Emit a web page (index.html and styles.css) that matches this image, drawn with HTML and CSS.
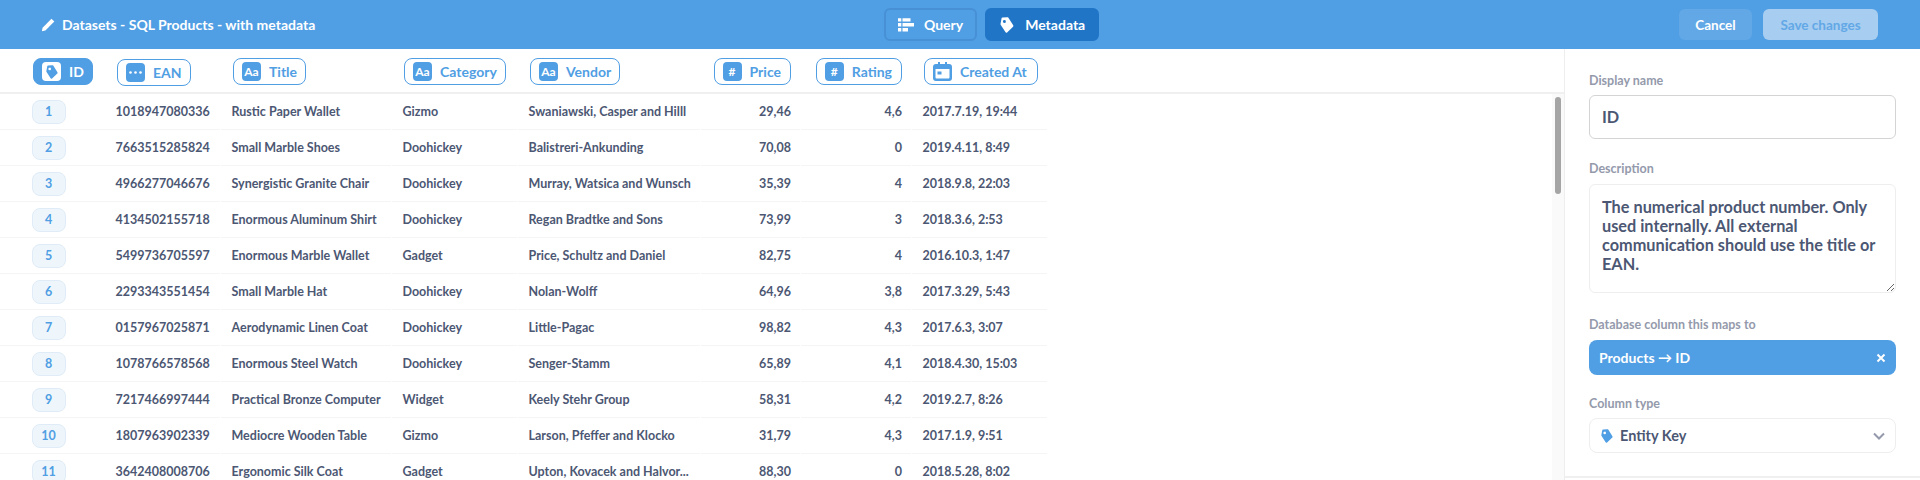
FILE: index.html
```html
<!DOCTYPE html>
<html lang="en">
<head>
    <meta charset="UTF-8">
    <title>Datasets - SQL Products - with metadata</title>
    <link rel="stylesheet" href="styles.css">
</head>
<body>
    <svg class="defs" width="0" height="0">
        <symbol id="tag" viewBox="0 0 16 16">
            <path fill-rule="evenodd" d="M3.600.6 8.400.3c.4 0 .7.1 1 .4l4.800 7.600c.4.600.2 1.300-.4 1.700l-5.700 5.400c-.6.4-1.300.3-1.700-.3L1.800 7.900c-.2-.3-.3-.6-.3-.9L2.500 1.600c.1-.6.5-1 1.100-1zM5.300 3a1.500 1.500 0 1 0 .1 3 1.500 1.500 0 0 0-.1-3z"/>
        </symbol>
    </svg>

    <header class="topbar">
        <div class="crumb">
            <svg class="pencil" viewBox="0 0 16 16"><path d="M12 .8 15.200 4 5 14.200 1 15l.8-4z"/></svg>
            <span>Datasets - SQL Products - with metadata</span>
        </div>
        <div class="tabs">
            <button class="tab">
                <svg class="tab-icon" viewBox="0 0 16 16"><path d="M0 1.200h3.300v3.300H0zM4.500 1.200h8v3.300h-8zM0 6h3.300v3.500H0zM4.500 6H16v3.500H4.500zM0 11h3.300v3.500H0zM4.500 11H10v3.500H4.500z"/></svg>
                Query
            </button>
            <button class="tab tab-active">
                <svg class="tab-icon"><use href="#tag"/></svg>
                Metadata
            </button>
        </div>
        <div class="actions">
            <button class="btn-cancel">Cancel</button>
            <button class="btn-save">Save changes</button>
        </div>
    </header>

    <main class="workspace">
        <section class="table-pane">
            <div class="head-row">
                <div class="head-cell"><span class="pill pill-on"><span class="type-icon"><svg class="tag-small"><use href="#tag"/></svg></span>ID</span></div>
                <div class="head-cell"><span class="pill"><span class="type-icon"><svg class="dots" viewBox="0 0 13 3"><circle cx="1.500" cy="1.500" r="1.300"/><circle cx="6.500" cy="1.500" r="1.300"/><circle cx="11.500" cy="1.500" r="1.300"/></svg></span>EAN</span></div>
                <div class="head-cell"><span class="pill"><span class="type-icon">Aa</span>Title</span></div>
                <div class="head-cell"><span class="pill"><span class="type-icon">Aa</span>Category</span></div>
                <div class="head-cell"><span class="pill"><span class="type-icon">Aa</span>Vendor</span></div>
                <div class="head-cell num"><span class="pill pill-num"><span class="type-icon">#</span>Price</span></div>
                <div class="head-cell num"><span class="pill pill-num"><span class="type-icon">#</span>Rating</span></div>
                <div class="head-cell"><span class="pill pill-date"><svg class="calendar" viewBox="0 0 19 19"><path fill-rule="evenodd" d="M5 0h2v2h5V0h2v2h2a3 3 0 0 1 3 3v11a3 3 0 0 1-3 3H3a3 3 0 0 1-3-3V5a3 3 0 0 1 3-3h2zM2.500 7v8.500a1 1 0 0 0 1 1h12a1 1 0 0 0 1-1V7zM4.500 9.500h4v3h-4z"/></svg>Created At</span></div>
            </div>
            <div class="body-wrap">
                <div class="rows">
                    <div class="row"><div class="cell"><span class="id-badge">1</span></div><div class="cell">1018947080336</div><div class="cell">Rustic Paper Wallet</div><div class="cell">Gizmo</div><div class="cell">Swaniawski, Casper and Hilll</div><div class="cell num">29,46</div><div class="cell num">4,6</div><div class="cell">2017.7.19, 19:44</div></div>
                    <div class="row"><div class="cell"><span class="id-badge">2</span></div><div class="cell">7663515285824</div><div class="cell">Small Marble Shoes</div><div class="cell">Doohickey</div><div class="cell">Balistreri-Ankunding</div><div class="cell num">70,08</div><div class="cell num">0</div><div class="cell">2019.4.11, 8:49</div></div>
                    <div class="row"><div class="cell"><span class="id-badge">3</span></div><div class="cell">4966277046676</div><div class="cell">Synergistic Granite Chair</div><div class="cell">Doohickey</div><div class="cell">Murray, Watsica and Wunsch</div><div class="cell num">35,39</div><div class="cell num">4</div><div class="cell">2018.9.8, 22:03</div></div>
                    <div class="row"><div class="cell"><span class="id-badge">4</span></div><div class="cell">4134502155718</div><div class="cell">Enormous Aluminum Shirt</div><div class="cell">Doohickey</div><div class="cell">Regan Bradtke and Sons</div><div class="cell num">73,99</div><div class="cell num">3</div><div class="cell">2018.3.6, 2:53</div></div>
                    <div class="row"><div class="cell"><span class="id-badge">5</span></div><div class="cell">5499736705597</div><div class="cell">Enormous Marble Wallet</div><div class="cell">Gadget</div><div class="cell">Price, Schultz and Daniel</div><div class="cell num">82,75</div><div class="cell num">4</div><div class="cell">2016.10.3, 1:47</div></div>
                    <div class="row"><div class="cell"><span class="id-badge">6</span></div><div class="cell">2293343551454</div><div class="cell">Small Marble Hat</div><div class="cell">Doohickey</div><div class="cell">Nolan-Wolff</div><div class="cell num">64,96</div><div class="cell num">3,8</div><div class="cell">2017.3.29, 5:43</div></div>
                    <div class="row"><div class="cell"><span class="id-badge">7</span></div><div class="cell">0157967025871</div><div class="cell">Aerodynamic Linen Coat</div><div class="cell">Doohickey</div><div class="cell">Little-Pagac</div><div class="cell num">98,82</div><div class="cell num">4,3</div><div class="cell">2017.6.3, 3:07</div></div>
                    <div class="row"><div class="cell"><span class="id-badge">8</span></div><div class="cell">1078766578568</div><div class="cell">Enormous Steel Watch</div><div class="cell">Doohickey</div><div class="cell">Senger-Stamm</div><div class="cell num">65,89</div><div class="cell num">4,1</div><div class="cell">2018.4.30, 15:03</div></div>
                    <div class="row"><div class="cell"><span class="id-badge">9</span></div><div class="cell">7217466997444</div><div class="cell">Practical Bronze Computer</div><div class="cell">Widget</div><div class="cell">Keely Stehr Group</div><div class="cell num">58,31</div><div class="cell num">4,2</div><div class="cell">2019.2.7, 8:26</div></div>
                    <div class="row"><div class="cell"><span class="id-badge">10</span></div><div class="cell">1807963902339</div><div class="cell">Mediocre Wooden Table</div><div class="cell">Gizmo</div><div class="cell">Larson, Pfeffer and Klocko</div><div class="cell num">31,79</div><div class="cell num">4,3</div><div class="cell">2017.1.9, 9:51</div></div>
                    <div class="row"><div class="cell"><span class="id-badge">11</span></div><div class="cell">3642408008706</div><div class="cell">Ergonomic Silk Coat</div><div class="cell">Gadget</div><div class="cell">Upton, Kovacek and Halvor...</div><div class="cell num">88,30</div><div class="cell num">0</div><div class="cell">2018.5.28, 8:02</div></div>
                </div>
                <div class="scroll-track"><div class="scroll-thumb"></div></div>
            </div>
        </section>

        <aside class="sidebar">
            <div class="fields">
                <label class="field-label" for="displayName">Display name</label>
                <input class="text-input" id="displayName" type="text" value="ID">

                <label class="field-label label-desc" for="description">Description</label>
                <textarea class="text-area" id="description">The numerical product number. Only used internally. All external communication should use the title or EAN.</textarea>

                <div class="field-label label-map">Database column this maps to</div>
                <div class="mapped">
                    <span>Products &rarr; ID</span>
                    <svg class="close" viewBox="0 0 10 10"><path d="M1.500 1.500l7 7M8.500 1.500l-7 7"/></svg>
                </div>

                <div class="field-label label-type">Column type</div>
                <div class="select">
                    <svg class="select-tag"><use href="#tag"/></svg>
                    <span class="select-text">Entity Key</span>
                    <svg class="chevron" viewBox="0 0 12 8"><path d="M1 1.500l5 5 5-5"/></svg>
                </div>
            </div>
        </aside>
    </main>
</body>
</html>
```

FILE: styles.css
```css
* {
    box-sizing: border-box;
}
html, body {
    height: 100%;
}
body {
    margin: 0;
    overflow: hidden;
    font-family: Lato, 'Noto Sans', sans-serif;
    font-weight: 700;
    color: #4c5773;
    background-color: white;
    text-rendering: optimizeLegibility;
}
button {
    font-family: inherit;
    font-weight: 700;
    border: none;
}
.defs {
    position: absolute;
}

/* top bar */
.topbar {
    display: grid;
    grid-template-columns: 842px auto 1fr;
    align-items: center;
    height: 49px;
    padding: 0 42px 0 41px;
    background-color: #509ee3;
    color: white;
}
.crumb {
    display: flex;
    align-items: center;
    gap: 7px;
    font-size: 14px;
}
.pencil {
    width: 14px;
    height: 14px;
    fill: white;
}
.tabs {
    display: flex;
    gap: 8px;
    margin-left: 1px;
}
.tab {
    display: flex;
    align-items: center;
    gap: 10px;
    height: 33px;
    padding: 0 12px;
    font-size: 14px;
    color: white;
    background-color: #509ee3;
    border: 2px solid #4890d6;
    border-radius: 6px;
}
.tab-active {
    background-color: #2075c7;
    border-color: #2075c7;
}
.tab-icon {
    width: 16px;
    height: 16px;
    fill: white;
}
.actions {
    display: flex;
    justify-content: flex-end;
    gap: 11px;
}
.btn-cancel, .btn-save {
    height: 31px;
    border-radius: 6px;
    font-size: 13.500px;
}
.btn-cancel {
    width: 73px;
    color: white;
    background-color: #62a8e6;
}
.btn-save {
    width: 115px;
    color: #62a8e6;
    background-color: #a7cdf1;
}

/* layout */
.workspace {
    display: flex;
    height: 431px;
}
.table-pane {
    flex: 0 0 1565px;
    display: flex;
    flex-direction: column;
    border-right: 1px solid #eeeeee;
}
.sidebar {
    flex: 1;
    padding-top: 23px;
}

/* table */
.head-row, .row {
    display: grid;
    grid-template-columns: 105px 116px 171px 126px 183px 100px 111px 136px;
}
.head-row {
    flex: 0 0 45px;
    border-bottom: 2px solid #f0f0f0;
    align-items: start;
    padding-top: 9px;
}
.head-cell {
    padding: 0 10px;
}
.head-cell:first-child {
    padding-left: 33px;
}
.head-cell:nth-child(2), .head-cell:nth-child(3), .head-cell:nth-child(4), .head-cell:nth-child(5), .head-cell:nth-child(8) {
    padding-left: 12px;
}
.num {
    display: flex;
    justify-content: flex-end;
}
.pill {
    display: inline-flex;
    align-items: center;
    gap: 8px;
    height: 27px;
    padding: 0 8px;
    font-size: 14px;
    white-space: nowrap;
    color: #509ee3;
    border: 1px solid #509ee3;
    border-radius: 8px;
}
.pill-num {
    padding-right: 9px;
}
.pill-date {
    padding-right: 10px;
}
.pill-on {
    color: white;
    background-color: #509ee3;
}
.type-icon {
    display: flex;
    align-items: center;
    justify-content: center;
    width: 19px;
    height: 19px;
    font-size: 12px;
    color: white;
    background-color: #509ee3;
    border-radius: 4px;
}
.pill-on .type-icon {
    background-color: white;
}
.tag-small {
    width: 14px;
    height: 14px;
    fill: #509ee3;
}
.dots {
    width: 13px;
    height: 3px;
    fill: white;
}
.calendar {
    width: 19px;
    height: 19px;
    fill: #509ee3;
}
.body-wrap {
    flex: 1;
    display: flex;
    min-height: 0;
    overflow: hidden;
}
.rows {
    flex: 1;
}
.row {
    height: 36px;
    font-size: 12.500px;
}
.cell {
    display: flex;
    align-items: center;
    padding: 0 10px 0 10.500px;
    margin-right: 1px;
    border-bottom: 1px solid #f5f5f5;
    white-space: nowrap;
}
.cell:first-child {
    padding-left: 31.500px;
    margin-right: 0;
}
.cell.num {
    justify-content: flex-end;
    padding-right: 9px;
}
.id-badge {
    width: 34px;
    height: 24px;
    line-height: 22px;
    text-align: center;
    color: #509ee3;
    background-color: #eef6fc;
    border: 1px solid #dfecf8;
    border-radius: 8px;
}
.scroll-track {
    flex: 0 0 12px;
    padding: 3px 3px 0;
    background-color: #fafafa;
}
.scroll-thumb {
    height: 97px;
    background-color: #a5a5a5;
    border-radius: 3px;
}

/* sidebar */
.fields {
    padding: 0 24px 23px;
    border-bottom: 2px solid #f0f0f0;
}
.field-label {
    display: block;
    margin-bottom: 5px;
    font-size: 12.500px;
    line-height: 18px;
    color: #949aab;
}
.label-desc {
    margin-top: 21px;
    margin-bottom: 6px;
}
.label-map {
    margin-top: 23px;
    margin-bottom: 6px;
}
.label-type {
    margin-top: 20px;
}
.text-input, .text-area {
    display: block;
    width: 100%;
    padding: 0 12px;
    font-family: inherit;
    font-size: 16.300px;
    font-weight: 700;
    color: #4c5773;
    background-color: white;
    border-radius: 6px;
    text-rendering: optimizeLegibility;
}
.text-input {
    height: 44px;
    padding-bottom: 2px;
    border: 1px solid #d4d4d4;
}
.text-area {
    height: 109px;
    padding: 12px;
    line-height: 19px;
    border: 1px solid #eeeeee;
}
.mapped {
    display: flex;
    align-items: center;
    justify-content: space-between;
    height: 35px;
    padding: 0 10px;
    font-size: 14px;
    color: white;
    background-color: #509ee3;
    border-radius: 8px;
}
.close {
    width: 10px;
    height: 10px;
    stroke: white;
    stroke-width: 2;
}
.select {
    display: flex;
    align-items: center;
    height: 35px;
    padding: 0 10px;
    font-size: 14.500px;
    border: 1px solid #eeeeee;
    border-radius: 8px;
}
.select-tag {
    width: 14px;
    height: 14px;
    fill: #509ee3;
}
.select-text {
    flex: 1;
    margin-left: 6px;
}
.chevron {
    width: 12px;
    height: 8px;
    fill: none;
    stroke: #949aab;
    stroke-width: 2;
}
```
